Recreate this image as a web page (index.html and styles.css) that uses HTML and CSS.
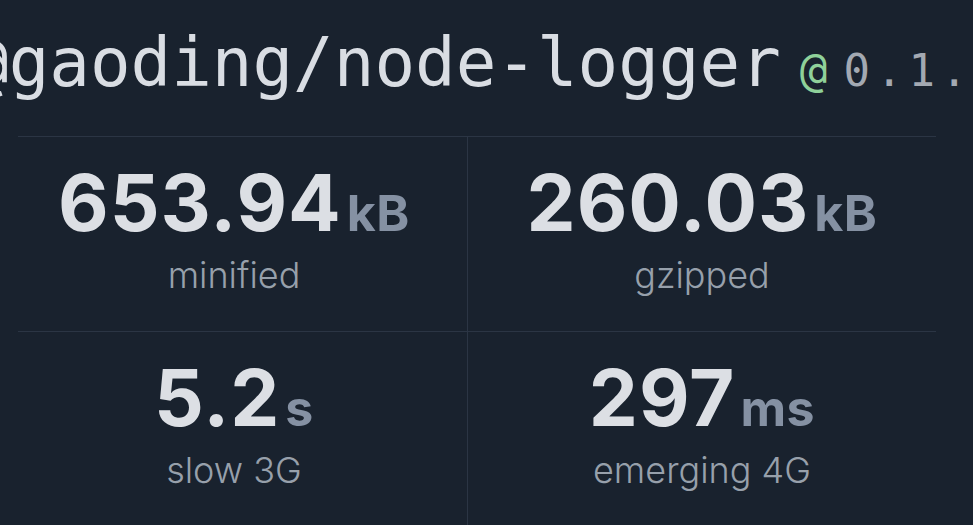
FILE: index.html
```html
<!DOCTYPE html>
<html lang="en">
<head>
    <meta charset="UTF-8">
    <meta name="viewport" content="width=device-width, initial-scale=1.0">
    <title>@gaoding/node-logger - bundle size</title>
    <link rel="stylesheet" href="styles.css">
</head>
<body>
    <div class="page">
        <h1 class="package-name">
            <span class="name">@gaoding/node-logger</span>
            <span class="at">@</span>
            <span class="version">0.1.0</span>
        </h1>

        <!-- size and download time stats -->
        <div class="stats">
            <div class="stat">
                <div class="value">653.94<span class="unit">kB</span></div>
                <div class="label">minified</div>
            </div>
            <div class="stat">
                <div class="value">260.03<span class="unit">kB</span></div>
                <div class="label">gzipped</div>
            </div>
            <div class="stat">
                <div class="value">5.2<span class="unit">s</span></div>
                <div class="label">slow 3G</div>
            </div>
            <div class="stat">
                <div class="value">297<span class="unit">ms</span></div>
                <div class="label">emerging 4G</div>
            </div>
        </div>
    </div>
</body>
</html>
```

FILE: styles.css
```css
html, body {
    margin: 0;
    padding: 0;
    height: 100%;
    overflow: hidden;
    background-color: #19222e;
}
.page {
    width: 936px;
}
.package-name {
    display: flex;
    align-items: baseline;
    height: 68px;
    white-space: nowrap;
    margin: 29px 0 39px -32px;
    font-family: "DejaVu Sans Mono", "Liberation Mono", monospace;
    font-weight: normal;
}
.name {
    font-size: 67.5px;
    line-height: 68px;
    color: #d9dde3;
}
.at {
    margin-left: 19px;
    font-size: 46px;
    line-height: 1;
    color: #8fd19a;
}
.version {
    margin-left: 16px;
    font-size: 44px;
    line-height: 1;
    letter-spacing: 6px;
    color: #a3a9b2;
}
.stats {
    display: grid;
    grid-template-columns: 450px 468px;
    margin-left: 18px;
    font-family: Inter, "Noto Sans", sans-serif;
}
.stat {
    height: 194px;
    border-top: 1px solid #2b3544;
    text-align: center;
}
.stat:nth-child(odd) {
    padding-right: 18px;
}
.stat:nth-child(even) {
    border-left: 1px solid #2b3544;
    margin-left: -1px;
}
.value {
    padding-top: 27px;
    font-size: 78px;
    font-weight: 700;
    line-height: 78px;
    letter-spacing: 1px;
    color: #dcdfe4;
}
.unit {
    margin-left: 5px;
    font-size: 50px;
    line-height: 1;
    letter-spacing: 0.5px;
    color: #8591a3;
}
.label {
    margin-top: 15px;
    font-size: 36px;
    font-weight: 300;
    line-height: 36px;
    color: #97a0ab;
}
```
